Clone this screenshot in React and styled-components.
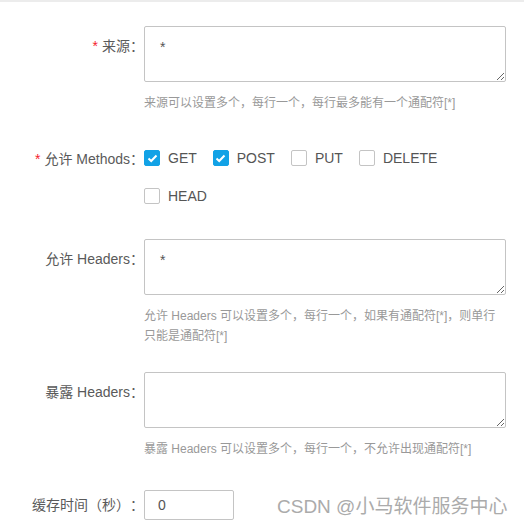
import React from "react";
import styled, { createGlobalStyle } from "styled-components";

const Global = createGlobalStyle`
  html, body { margin: 0; padding: 0; background: #fff; }
  body { font-family: "Liberation Sans", "Noto Sans CJK SC", sans-serif; }
  * { box-sizing: border-box; }
`;

const Page = styled.div`
  position: relative;
  width: 524px;
  min-height: 523px;
  border-top: 2px solid #ececec;
  padding: 24px 18px 0 0;
  font-family: "Liberation Sans", "Noto Sans CJK SC", sans-serif;
  font-size: 14px;
  color: #606266;
  text-spacing-trim: space-all;
`;

const Item = styled.div`
  display: flex;
  align-items: flex-start;
  margin-bottom: ${(p) => p.$mb ?? 26}px;
`;

const Label = styled.label`
  flex: 0 0 144px;
  text-align: right;
  line-height: 40px;
  font-size: 14px;
  color: #5a5a5a;
  white-space: nowrap;
  text-spacing-trim: space-all;
  &::before {
    content: ${(p) => (p.$required ? '"*"' : '""')};
    color: #f5222d;
    margin-right: ${(p) => (p.$required ? "4px" : "0")};
  }
`;

const Content = styled.div`
  flex: 1;
  min-width: 0;
`;

const TextArea = styled.textarea`
  display: block;
  width: 100%;
  height: 56px;
  padding: 10px 15px;
  border: 1px solid #c4c4c4;
  border-radius: 2px;
  font-family: "Liberation Sans", "Noto Sans CJK SC", sans-serif;
  font-size: 14px;
  line-height: 20px;
  color: #555;
  outline: none;
  resize: vertical;
`;

const Hint = styled.div`
  margin-top: 11px;
  font-size: 12px;
  line-height: 20px;
  color: #999;
`;

const Group = styled.div`
  display: flex;
  flex-wrap: wrap;
`;

const CheckItem = styled.label`
  display: flex;
  align-items: center;
  height: 38px;
  margin-right: 16px;
  font-size: 14px;
  color: #555;
  cursor: pointer;
`;

const Box = styled.span`
  display: inline-flex;
  align-items: center;
  justify-content: center;
  width: 16px;
  height: 16px;
  margin-right: 8px;
  border-radius: 2px;
  border: 1px solid ${(p) => (p.$checked ? "#12a2e6" : "#c4c4c4")};
  background: ${(p) => (p.$checked ? "#12a2e6" : "#fff")};
`;

const Input = styled.input`
  display: block;
  width: 90px;
  height: 30px;
  margin-top: 5px;
  padding: 0 13px;
  border: 1px solid #c4c4c4;
  border-radius: 2px;
  font-family: "Liberation Sans", "Noto Sans CJK SC", sans-serif;
  font-size: 14px;
  color: #555;
  outline: none;
`;

const Watermark = styled.div`
  position: absolute;
  left: 277px;
  top: 495px;
  font-size: 19px;
  line-height: 20px;
  color: #ababab;
  white-space: nowrap;
  text-shadow: 0 0 1px #fff;
  pointer-events: none;
`;

const Check = () => (
  <svg width="11" height="9" viewBox="0 0 11 9">
    <polyline points="1.5,4.5 4.2,7 9.5,1.5" fill="none" stroke="#fff" strokeWidth="2" />
  </svg>
);

const methods = [
  { name: "GET", checked: true },
  { name: "POST", checked: true },
  { name: "PUT", checked: false },
  { name: "DELETE", checked: false },
  { name: "HEAD", checked: false },
];

export default function App() {
  return (
    <>
      <Global />
      <Page>
        <Item>
          <Label $required>来源：</Label>
          <Content>
            <TextArea defaultValue="*" />
            <Hint>来源可以设置多个，每行一个，每行最多能有一个通配符[*]</Hint>
          </Content>
        </Item>
        <Item $mb={24}>
          <Label $required>允许 Methods：</Label>
          <Content>
            <Group>
              {methods.map((m) => (
                <CheckItem key={m.name}>
                  <Box $checked={m.checked}>{m.checked && <Check />}</Box>
                  {m.name}
                </CheckItem>
              ))}
            </Group>
          </Content>
        </Item>
        <Item>
          <Label>允许 Headers：</Label>
          <Content>
            <TextArea defaultValue="*" />
            <Hint>允许 Headers 可以设置多个，每行一个，如果有通配符[*]，则单行只能是通配符[*]</Hint>
          </Content>
        </Item>
        <Item>
          <Label>暴露 Headers：</Label>
          <Content>
            <TextArea defaultValue="" />
            <Hint>暴露 Headers 可以设置多个，每行一个，不允许出现通配符[*]</Hint>
          </Content>
        </Item>
        <Item $mb={0}>
          <Label>缓存时间（秒）：</Label>
          <Content>
            <Input defaultValue="0" />
          </Content>
        </Item>
        <Watermark>CSDN @小马软件服务中心</Watermark>
      </Page>
    </>
  );
}
